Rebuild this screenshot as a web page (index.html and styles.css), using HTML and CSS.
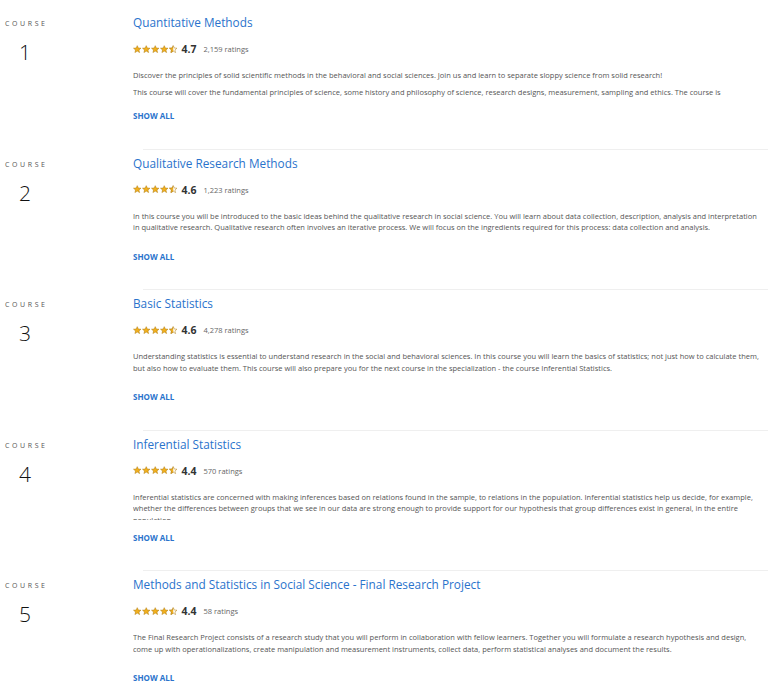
FILE: index.html
```html
<!DOCTYPE html>
<html lang="en">
<head>
<meta charset="utf-8">
<title>Courses</title>
<link rel="stylesheet" href="styles.css">
</head>
<body>
<svg width="0" height="0" class="defs">
  <defs>
    <symbol id="star" viewBox="0 0 20 20">
      <polygon points="10,1.5 12.6,7.2 18.8,7.6 14,11.6 15.5,17.8 10,14.4 4.5,17.8 6,11.6 1.2,7.6 7.4,7.2" fill="#f2b01e" stroke="#b07a0a" stroke-width="1.2" stroke-linejoin="round"/>
    </symbol>
    <symbol id="half" viewBox="0 0 20 20">
      <clipPath id="lefthalf"><rect x="0" y="0" width="10" height="20"/></clipPath>
      <polygon points="10,1.5 12.6,7.2 18.8,7.6 14,11.6 15.5,17.8 10,14.4 4.5,17.8 6,11.6 1.2,7.6 7.4,7.2" fill="none" stroke="#b07a0a" stroke-width="1.2" stroke-linejoin="round"/>
      <polygon clip-path="url(#lefthalf)" points="10,1.5 12.6,7.2 18.8,7.6 14,11.6 15.5,17.8 10,14.4 4.5,17.8 6,11.6 1.2,7.6 7.4,7.2" fill="#f2b01e" stroke="#b07a0a" stroke-width="1.2" stroke-linejoin="round"/>
    </symbol>
  </defs>
</svg>

<div class="course">
  <div class="side"><div class="label">COURSE</div><div class="num">1</div></div>
  <div class="content">
    <a class="title">Quantitative Methods</a>
    <div class="rating">
      <span class="stars"><svg><use href="#star"/></svg><svg><use href="#star"/></svg><svg><use href="#star"/></svg><svg><use href="#star"/></svg><svg><use href="#half"/></svg></span>
      <span class="score">4.7</span><span class="count">2,159 ratings</span>
    </div>
    <div class="desc">
      <p>Discover the principles of solid scientific methods in the behavioral and social sciences. Join us and learn to separate sloppy science from solid research!</p>
      <p>This course will cover the fundamental principles of science, some history and philosophy of science, research designs, measurement, sampling and ethics. The course is comparable to a university level introductory course on quantitative research methods in the social sciences.</p>
    </div>
    <a class="more">SHOW ALL</a>
    <div class="sep"></div>
  </div>
</div>

<div class="course">
  <div class="side"><div class="label">COURSE</div><div class="num">2</div></div>
  <div class="content">
    <a class="title">Qualitative Research Methods</a>
    <div class="rating">
      <span class="stars"><svg><use href="#star"/></svg><svg><use href="#star"/></svg><svg><use href="#star"/></svg><svg><use href="#star"/></svg><svg><use href="#half"/></svg></span>
      <span class="score">4.6</span><span class="count">1,223 ratings</span>
    </div>
    <div class="desc">
      <p>In this course you will be introduced to the basic ideas behind the qualitative research in social science. You will learn about data collection, description, analysis and interpretation in qualitative research. Qualitative research often involves an iterative process. We will focus on the ingredients required for this process: data collection and analysis.</p>
    </div>
    <a class="more">SHOW ALL</a>
    <div class="sep"></div>
  </div>
</div>

<div class="course">
  <div class="side"><div class="label">COURSE</div><div class="num">3</div></div>
  <div class="content">
    <a class="title">Basic Statistics</a>
    <div class="rating">
      <span class="stars"><svg><use href="#star"/></svg><svg><use href="#star"/></svg><svg><use href="#star"/></svg><svg><use href="#star"/></svg><svg><use href="#half"/></svg></span>
      <span class="score">4.6</span><span class="count">4,278 ratings</span>
    </div>
    <div class="desc">
      <p>Understanding statistics is essential to understand research in the social and behavioral sciences. In this course you will learn the basics of statistics; not just how to calculate them, but also how to evaluate them. This course will also prepare you for the next course in the specialization - the course Inferential Statistics.</p>
    </div>
    <a class="more">SHOW ALL</a>
    <div class="sep"></div>
  </div>
</div>

<div class="course">
  <div class="side"><div class="label">COURSE</div><div class="num">4</div></div>
  <div class="content">
    <a class="title">Inferential Statistics</a>
    <div class="rating">
      <span class="stars"><svg><use href="#star"/></svg><svg><use href="#star"/></svg><svg><use href="#star"/></svg><svg><use href="#star"/></svg><svg><use href="#half"/></svg></span>
      <span class="score">4.4</span><span class="count">570 ratings</span>
    </div>
    <div class="desc">
      <p>Inferential statistics are concerned with making inferences based on relations found in the sample, to relations in the population. Inferential statistics help us decide, for example, whether the differences between groups that we see in our data are strong enough to provide support for our hypothesis that group differences exist in general, in the entire population.</p>
    </div>
    <a class="more">SHOW ALL</a>
    <div class="sep"></div>
  </div>
</div>

<div class="course">
  <div class="side"><div class="label">COURSE</div><div class="num">5</div></div>
  <div class="content">
    <a class="title">Methods and Statistics in Social Science - Final Research Project</a>
    <div class="rating">
      <span class="stars"><svg><use href="#star"/></svg><svg><use href="#star"/></svg><svg><use href="#star"/></svg><svg><use href="#star"/></svg><svg><use href="#half"/></svg></span>
      <span class="score">4.4</span><span class="count">58 ratings</span>
    </div>
    <div class="desc">
      <p>The Final Research Project consists of a research study that you will perform in collaboration with fellow learners. Together you will formulate a research hypothesis and design, come up with operationalizations, create manipulation and measurement instruments, collect data, perform statistical analyses and document the results.</p>
    </div>
    <a class="more">SHOW ALL</a>
    <div class="sep"></div>
  </div>
</div>
</body>
</html>
```

FILE: styles.css
```css
html, body {
  margin: 0;
  padding: 0;
  background: #ffffff;
}
body {
  font-family: "Open Sans", "Liberation Sans", sans-serif;
  color: #333333;
  overflow: hidden;
}
.defs {
  position: absolute;
  width: 0;
  height: 0;
}
.course {
  display: flex;
  height: 140.5px;
}
.side {
  width: 50px;
  flex: none;
  text-align: center;
  padding-top: 19px;
}
.label {
  font-size: 7px;
  line-height: 10px;
  letter-spacing: 2.6px;
  margin-left: 2.6px;
  color: #555555;
}
.num {
  margin-top: 10px;
  font-size: 21px;
  line-height: 26px;
  font-weight: 300;
  color: #111111;
}
.content {
  margin-left: 83px;
  width: 626px;
  padding-top: 14px;
}
.title {
  display: block;
  font-size: 11.8px;
  line-height: 16px;
  color: #2a73cc;
}
.rating {
  display: flex;
  align-items: center;
  height: 14px;
  margin-top: 12px;
}
.stars {
  display: flex;
  gap: 0.5px;
}
.stars svg {
  width: 8.5px;
  height: 8.5px;
}
.score {
  font-size: 10.5px;
  font-weight: 700;
  color: #333333;
  margin-left: 4px;
}
.count {
  font-size: 7.5px;
  color: #666666;
  margin-left: 7px;
}
.desc {
  margin-top: 14px;
  max-height: 28px;
  overflow: hidden;
  font-size: 7.5px;
  line-height: 11.5px;
  color: #555555;
}
.desc p {
  margin: 0 0 5px 0;
}
.more {
  display: block;
  margin-top: 13px;
  font-size: 8px;
  line-height: 10px;
  font-weight: 700;
  color: #2a73cc;
}
.sep {
  margin-top: 27.5px;
  margin-left: 10px;
  margin-right: -10px;
  height: 1px;
  background: #efefef;
}
```
